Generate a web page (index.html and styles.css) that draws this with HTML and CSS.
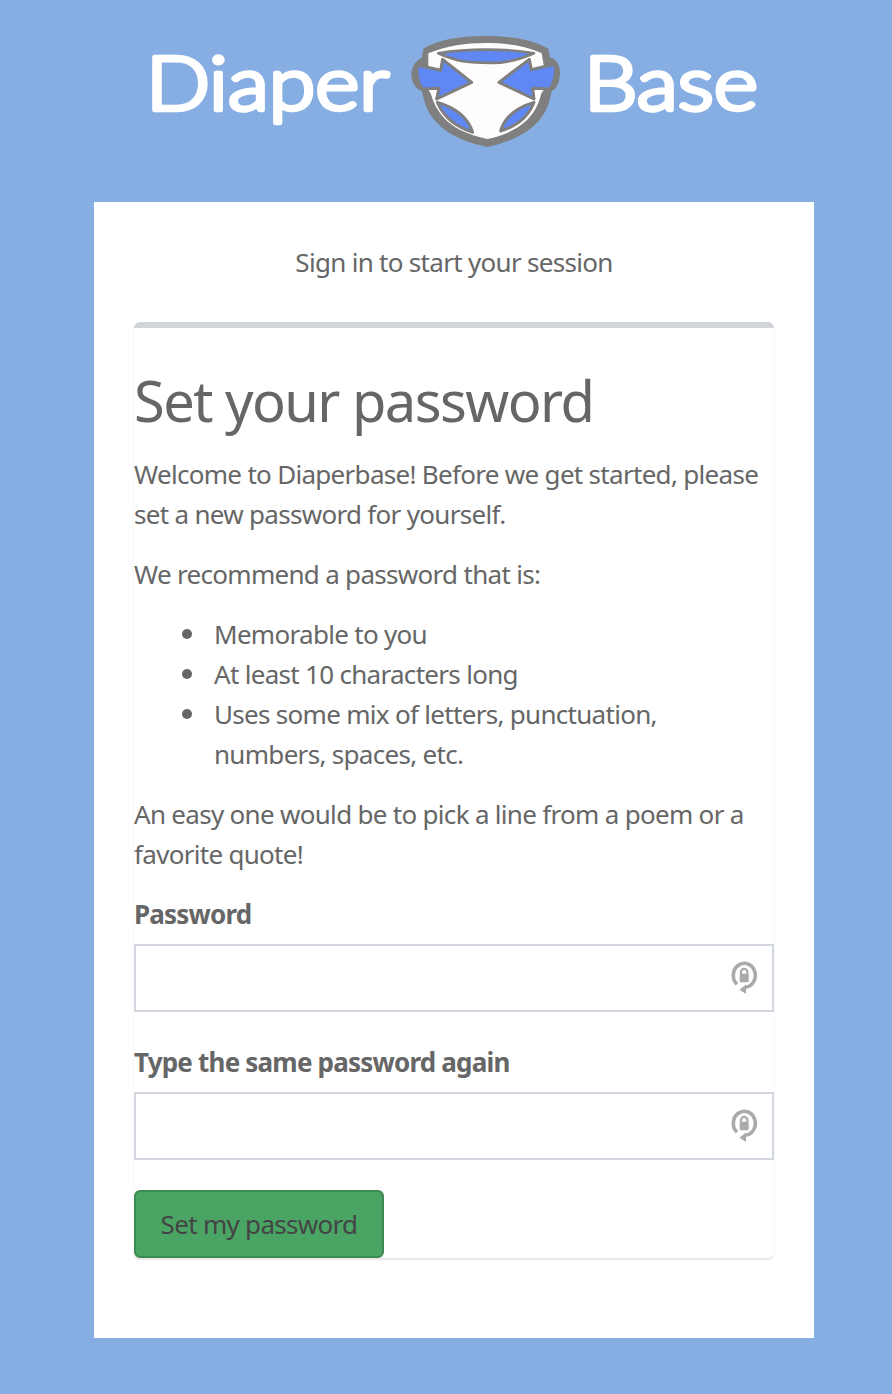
FILE: index.html
```html
<!DOCTYPE html>
<html>
<head>
    <title>Diaper Base - Set your password</title>
    <meta charset="UTF-8">
    <meta name="viewport" content="width=device-width, initial-scale=1.0">
    <link rel="stylesheet" href="styles.css">
</head>
<body>
    <div class="login-logo">
        <svg class="logo-svg" width="892" height="202" viewBox="0 0 892 202">
            <text class="logo-text" x="146" y="110" textLength="243" lengthAdjust="spacingAndGlyphs">Diaper</text>
            <text class="logo-text" x="584" y="110" textLength="174" lengthAdjust="spacingAndGlyphs">Base</text>
            <!-- diaper mark, drawn on a 3x grid -->
            <g transform="translate(400 25) scale(0.3333)">
                <path fill="#7f7f7f" stroke="#7f7f7f" stroke-width="4" stroke-linejoin="round" d="M255 35 C330 35 400 47 443 72 L448 98 C473 106 480 130 478 150 C476 175 468 190 454 197 L444 235 C420 310 340 348 262 364 C180 348 102 310 77 235 L67 197 C47 190 35 170 36 145 C38 120 52 106 67 99 L72 72 C115 47 180 35 255 35 Z"/>
                <path fill="#fffdfb" d="M85 85 C140 62 200 54 255 54 C320 54 375 62 425 85 L432 125 L432 195 L424 205 C405 290 340 325 262 342 C180 325 115 290 92 205 L85 195 Z"/>
                <path class="logo-part" stroke-width="8" d="M115 85 C200 70 320 70 402 85 C340 112 290 116 255 113 C210 114 170 110 115 85 Z"/>
                <path class="logo-part" stroke-width="9" d="M215 172 L128 103 L122 136 L52 120 C48 140 52 175 68 192 L117 190 L110 222 Z"/>
                <path class="logo-part" stroke-width="9" d="M297 172 L388 103 L394 134 L464 118 C470 140 464 175 448 192 L398 190 L402 222 Z"/>
                <path class="logo-part" stroke-width="9" d="M112 232 C165 247 203 275 218 322 C175 306 135 285 112 232 Z"/>
                <path class="logo-part" stroke-width="9" d="M402 232 C352 247 314 275 302 318 C342 306 382 285 402 232 Z"/>
            </g>
        </svg>
    </div>

    <div class="login-box">
        <p class="login-msg">Sign in to start your session</p>

        <div class="box">
            <h1>Set your password</h1>
            <p>Welcome to Diaperbase! Before we get started, please set a new password for yourself.</p>
            <p>We recommend a password that is:</p>
            <ul>
                <li>Memorable to you</li>
                <li>At least 10 characters long</li>
                <li>Uses some mix of letters, punctuation, numbers, spaces, etc.</li>
            </ul>
            <p>An easy one would be to pick a line from a poem or a favorite quote!</p>

            <form>
                <label class="field">
                    <span class="field-label">Password</span>
                    <span class="input-wrap">
                        <input type="password">
                        <svg class="input-icon" width="28" height="34" viewBox="0 0 28 34">
                            <path class="icon-ring" d="M6 23.3 A11 12 0 1 1 15 26.2"/>
                            <path class="icon-fill" d="M15 23.5 L8.5 28.8 L15 33 Z"/>
                            <path class="icon-shackle" d="M10 13 V11 A3.2 3.2 0 0 1 16.4 11 V13"/>
                            <rect class="icon-fill" x="8.7" y="12.7" width="9" height="8.5" rx="1"/>
                        </svg>
                    </span>
                </label>
                <label class="field">
                    <span class="field-label">Type the same password again</span>
                    <span class="input-wrap">
                        <input type="password">
                        <svg class="input-icon" width="28" height="34" viewBox="0 0 28 34">
                            <path class="icon-ring" d="M6 23.3 A11 12 0 1 1 15 26.2"/>
                            <path class="icon-fill" d="M15 23.5 L8.5 28.8 L15 33 Z"/>
                            <path class="icon-shackle" d="M10 13 V11 A3.2 3.2 0 0 1 16.4 11 V13"/>
                            <rect class="icon-fill" x="8.7" y="12.7" width="9" height="8.5" rx="1"/>
                        </svg>
                    </span>
                </label>
                <button type="button" class="btn-submit">Set my password</button>
            </form>
        </div>
    </div>
</body>
</html>
```

FILE: styles.css
```css
body {
    margin: 0;
    min-height: 1394px;
    background: #87aee3;
    font-family: "Noto Sans", Arial, sans-serif;
    font-size: 26px;
    line-height: 40px;
    letter-spacing: -0.7px;
    color: #666;
}

.login-logo {
    height: 202px;
}

.logo-svg {
    display: block;
}

.logo-text {
    font-family: "Lato", sans-serif;
    font-weight: 300;
    font-size: 74px;
    letter-spacing: 0;
    fill: #fff;
    stroke: #fff;
    stroke-width: 4.5px;
    stroke-linejoin: round;
    stroke-linecap: round;
}

.logo-part {
    fill: #6088f5;
    stroke: #7f7f7f;
    stroke-linejoin: round;
}

.login-box {
    width: 640px;
    margin-left: 94px;
    padding: 40px 40px 80px;
    background: #fff;
}

.login-msg {
    margin: 0 0 40px;
    text-align: center;
}

.box {
    border-top: 6px solid #d1d5da;
    border-radius: 6px;
    box-shadow: 0 2px 2px rgba(0,0,0,0.1);
}

h1 {
    margin: 39px 0 21px;
    font-size: 56px;
    line-height: 66px;
    font-weight: 400;
    letter-spacing: -1.55px;
}

p {
    margin: 0 0 20px;
}

ul {
    margin: 0 0 20px;
    padding: 0 30px 0 80px;
    list-style: none;
}

li {
    position: relative;
}

li::before {
    content: "";
    position: absolute;
    left: -32px;
    top: 15px;
    width: 10px;
    height: 10px;
    border-radius: 50%;
    background: #666;
}

.field {
    display: block;
    margin-bottom: 30px;
}

.field-label {
    display: block;
    margin-bottom: 10px;
    font-weight: 700;
    letter-spacing: -0.8px;
}

.input-wrap {
    display: block;
    position: relative;
}

input {
    display: block;
    box-sizing: border-box;
    width: 100%;
    height: 68px;
    border: 2px solid #d2d6de;
    background: #fff;
    outline: none;
}

.input-icon {
    position: absolute;
    top: 17px;
    right: 15px;
}

.icon-ring {
    fill: none;
    stroke: #aaa;
    stroke-width: 3.6;
}

.icon-shackle {
    fill: none;
    stroke: #aaa;
    stroke-width: 2.2;
}

.icon-fill {
    fill: #aaa;
}

.btn-submit {
    display: block;
    box-sizing: border-box;
    width: 250px;
    height: 68px;
    padding: 0;
    border: 2px solid #3d8a53;
    border-radius: 6px;
    background: #4aa564;
    color: #444;
    font-family: inherit;
    font-size: 26px;
    letter-spacing: -0.7px;
}
```
